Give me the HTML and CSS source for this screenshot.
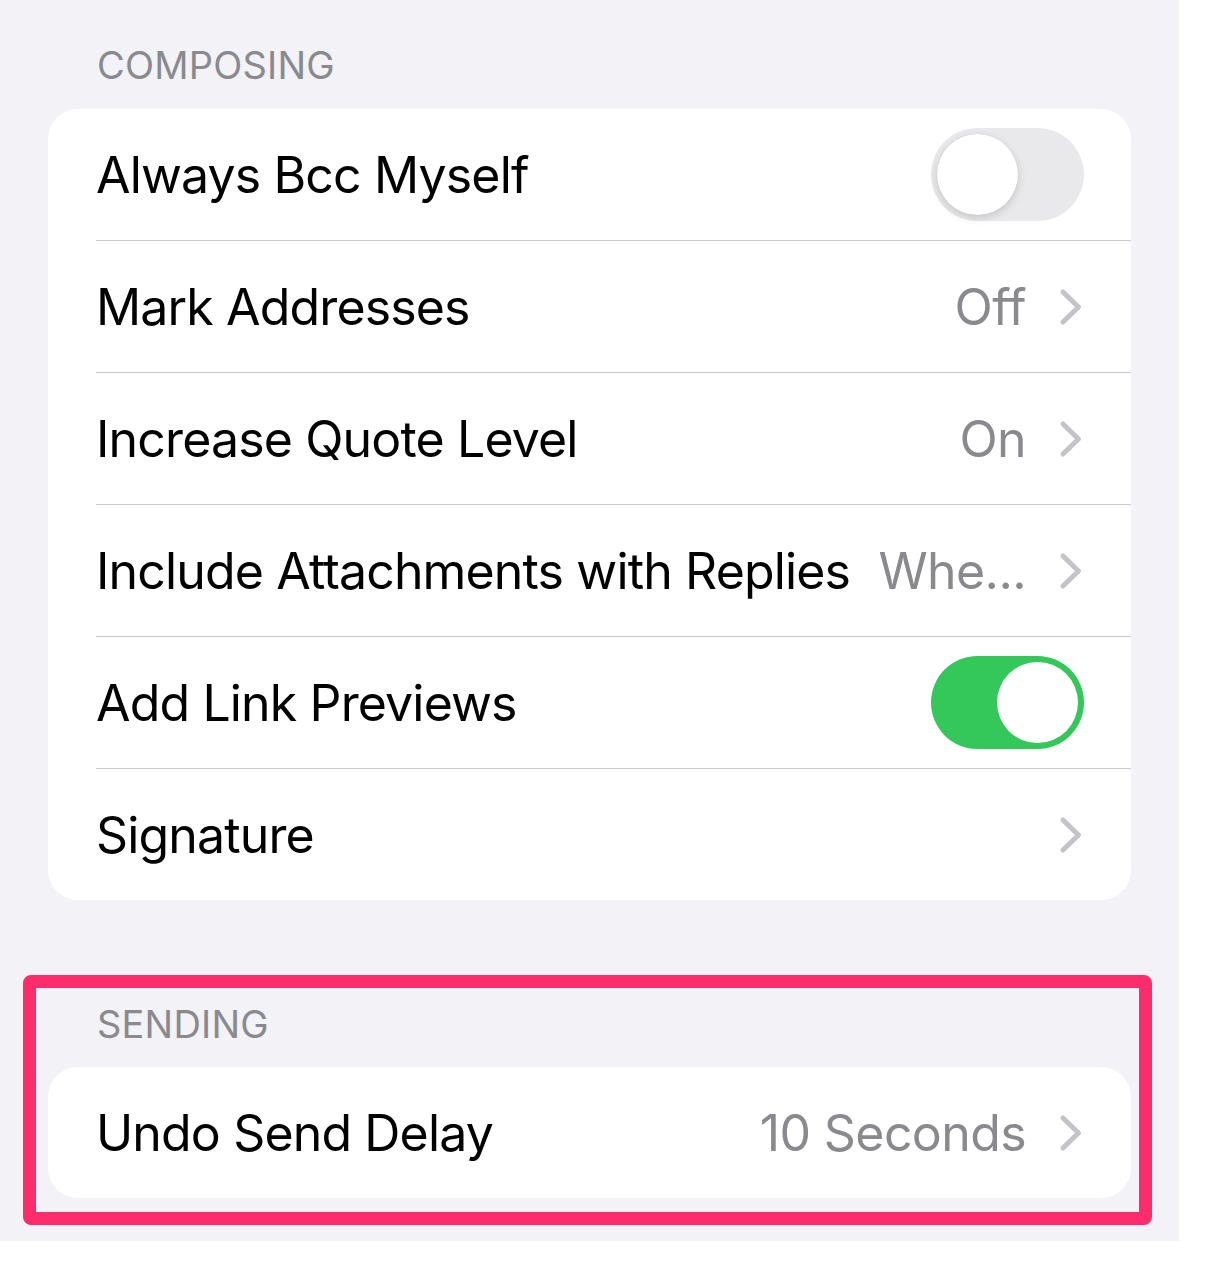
FILE: index.html
```html
<!DOCTYPE html>
<html>
  <head>
    <title>Mail Settings</title>
    <link rel="stylesheet" href="styles.css">
  </head>
  <body>
    <div class="screen">
      <section class="group">
        <h2 class="group-title">COMPOSING</h2>
        <div class="card">
          <div class="row">
            <span class="label">Always Bcc Myself</span>
            <span class="switch"><span class="knob"></span></span>
          </div>
          <div class="row">
            <span class="label">Mark Addresses</span>
            <span class="value">Off</span>
            <svg class="chevron" viewBox="0 0 24 38"><polyline points="4,4 19.5,19 4,34" /></svg>
          </div>
          <div class="row">
            <span class="label">Increase Quote Level</span>
            <span class="value">On</span>
            <svg class="chevron" viewBox="0 0 24 38"><polyline points="4,4 19.5,19 4,34" /></svg>
          </div>
          <div class="row">
            <span class="label">Include Attachments with Replies</span>
            <span class="value">Whe...</span>
            <svg class="chevron" viewBox="0 0 24 38"><polyline points="4,4 19.5,19 4,34" /></svg>
          </div>
          <div class="row">
            <span class="label">Add Link Previews</span>
            <span class="switch on"><span class="knob"></span></span>
          </div>
          <div class="row">
            <span class="label">Signature</span>
            <span class="value"></span>
            <svg class="chevron" viewBox="0 0 24 38"><polyline points="4,4 19.5,19 4,34" /></svg>
          </div>
        </div>
      </section>

      <!-- highlighted group -->
      <section class="group marked">
        <h2 class="group-title">SENDING</h2>
        <div class="card">
          <div class="row">
            <span class="label">Undo Send Delay</span>
            <span class="value">10 Seconds</span>
            <svg class="chevron" viewBox="0 0 24 38"><polyline points="4,4 19.5,19 4,34" /></svg>
          </div>
        </div>
      </section>
    </div>
  </body>
</html>
```

FILE: styles.css
```css
body {
  margin: 0;
  background: #fff;
  font-family: Inter, "Noto Sans", sans-serif;
}
.screen {
  width: 1179px;
  height: 1241px;
  background: #f2f2f7;
  padding-top: 39px;
  box-sizing: border-box;
}
.group {
  margin: 0 48px;
}
.group-title {
  margin: 0 0 18px 0;
  padding-left: 49px;
  font-size: 38px;
  font-weight: 400;
  line-height: 52px;
  color: #8a8a8e;
  letter-spacing: 0.2px;
}
.card {
  background: #fff;
  border-radius: 30px;
  overflow: hidden;
}
.row {
  display: flex;
  align-items: center;
  height: 132px;
  box-sizing: border-box;
  margin-left: 48px;
  padding-right: 48px;
  border-bottom: 1px solid #c9c7cc;
}
.row:last-child {
  border-bottom: none;
  height: 131px;
}
.label {
  flex: 1;
  font-size: 50px;
  color: #000;
  letter-spacing: -0.85px;
  white-space: nowrap;
}
.value {
  font-size: 50px;
  color: #8a8a8e;
  letter-spacing: -0.6px;
  margin-right: 33px;
  white-space: nowrap;
}
.chevron {
  width: 24px;
  height: 38px;
  fill: none;
  stroke: #c5c3c8;
  stroke-width: 5;
  stroke-linecap: round;
  stroke-linejoin: round;
}
.switch {
  position: relative;
  width: 153px;
  height: 93px;
  border-radius: 47px;
  background: #e9e9eb;
  margin-right: -1px;
}
.switch .knob {
  position: absolute;
  top: 6px;
  left: 6px;
  width: 81px;
  height: 81px;
  border-radius: 50%;
  background: #fff;
  box-shadow: 0 3px 8px rgba(0, 0, 0, 0.15), 0 0 1px rgba(0, 0, 0, 0.16);
}
.switch.on {
  background: #34c759;
}
.switch.on .knob {
  left: 66px;
  box-shadow: none;
}
.marked {
  margin: 75px 27px 0 23px;
  padding: 10px 8px 14px 12px;
  border: 13px solid #fe2c6c;
  border-radius: 8px;
}
.marked .group-title {
  margin-bottom: 17px;
}
```
